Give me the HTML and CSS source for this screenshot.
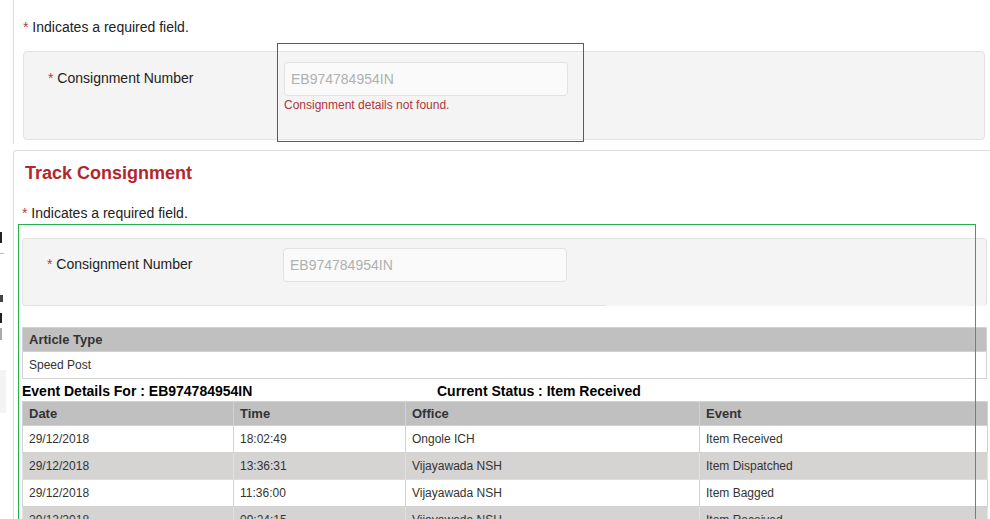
FILE: index.html
```html
<!DOCTYPE html>
<html lang="en">
<head>
    <meta charset="UTF-8">
    <meta name="viewport" content="width=device-width, initial-scale=1.0">
    <title>Track Consignment</title>
    <link rel="stylesheet" href="styles.css">
</head>
<body>
    <div class="page">
        <!-- fatia da coluna vizinha -->
        <div class="side-strip">
            <span class="frag frag-l1"></span>
            <span class="frag frag-line"></span>
            <span class="frag frag-s"></span>
            <span class="frag frag-l2"></span>
            <span class="frag frag-grey"></span>
            <span class="frag frag-box"></span>
        </div>

        <div class="main">
            <section class="panel panel-cut">
                <p class="req-note"><span class="req">*</span> Indicates a required field.</p>
                <div class="well">
                    <div class="form-row">
                        <label class="form-label"><span class="req">*</span> Consignment Number</label>
                        <div class="form-field">
                            <input class="form-input" type="text" placeholder="EB974784954IN">
                            <div class="field-error">Consignment details not found.</div>
                        </div>
                    </div>
                </div>
                <div class="mark mark-red"></div>
            </section>

            <section class="panel panel-track">
                <h2 class="panel-title">Track Consignment</h2>
                <p class="req-note"><span class="req">*</span> Indicates a required field.</p>
                <div class="well well-short">
                    <div class="form-row">
                        <label class="form-label"><span class="req">*</span> Consignment Number</label>
                        <div class="form-field">
                            <input class="form-input" type="text" placeholder="EB974784954IN">
                        </div>
                    </div>
                </div>

                <table class="grid grid-article">
                    <thead>
                        <tr><th>Article Type</th></tr>
                    </thead>
                    <tbody>
                        <tr><td>Speed Post</td></tr>
                    </tbody>
                </table>

                <div class="event-head">
                    <span class="event-for">Event Details For : EB974784954IN</span>
                    <span class="event-status">Current Status : Item Received</span>
                </div>

                <table class="grid grid-events">
                    <colgroup>
                        <col class="col-date">
                        <col class="col-time">
                        <col class="col-office">
                        <col class="col-event">
                    </colgroup>
                    <thead>
                        <tr>
                            <th>Date</th>
                            <th>Time</th>
                            <th>Office</th>
                            <th>Event</th>
                        </tr>
                    </thead>
                    <tbody>
                        <tr>
                            <td>29/12/2018</td>
                            <td>18:02:49</td>
                            <td>Ongole ICH</td>
                            <td>Item Received</td>
                        </tr>
                        <tr>
                            <td>29/12/2018</td>
                            <td>13:36:31</td>
                            <td>Vijayawada NSH</td>
                            <td>Item Dispatched</td>
                        </tr>
                        <tr>
                            <td>29/12/2018</td>
                            <td>11:36:00</td>
                            <td>Vijayawada NSH</td>
                            <td>Item Bagged</td>
                        </tr>
                        <tr>
                            <td>29/12/2018</td>
                            <td>09:24:15</td>
                            <td>Vijayawada NSH</td>
                            <td>Item Received</td>
                        </tr>
                        <tr>
                            <td>28/12/2018</td>
                            <td>20:14:02</td>
                            <td>Vijayawada NSH</td>
                            <td>Item Received</td>
                        </tr>
                    </tbody>
                </table>

                <div class="mark mark-green"></div>
            </section>
        </div>
    </div>
</body>
</html>
```

FILE: styles.css
```css
/* Estilos gerais */
html, body {
    margin: 0;
    padding: 0;
    overflow: hidden;
    height: 100%;
}

body {
    font-family: 'Liberation Sans', Arial, Helvetica, sans-serif;
    font-size: 14px;
    color: #222;
    background-color: #fff;
}

.page {
    display: flex;
    width: 990px;
}

/* coluna lateral cortada */
.side-strip {
    width: 13px;
    flex-shrink: 0;
    display: flex;
    flex-direction: column;
    align-items: flex-start;
}

.frag {
    display: block;
}

.frag-l1 {
    width: 2px;
    height: 11px;
    margin-top: 232px;
    background-color: #222;
}

.frag-line {
    width: 4px;
    height: 1px;
    margin-top: 10px;
    background-color: #bbb;
}

.frag-s {
    width: 3px;
    height: 7px;
    margin-top: 41px;
    background-color: #444;
}

.frag-l2 {
    width: 2px;
    height: 10px;
    margin-top: 11px;
    background-color: #222;
}

.frag-grey {
    width: 2px;
    height: 12px;
    margin-top: 5px;
    background-color: #aaa;
}

.frag-box {
    width: 6px;
    height: 43px;
    margin-top: 30px;
    background-color: #f4f4f4;
}

.main {
    flex: 1;
    min-width: 0;
}

/* Paineis */
.panel {
    position: relative;
    border-left: 1px solid #ddd;
}

.panel-cut {
    padding-bottom: 4px;
}

.panel-track {
    margin-top: 6px;
    border-top: 1px solid #ddd;
    border-top-left-radius: 4px;
    height: 380px;
}

.panel-title {
    margin: 0;
    padding: 12px 0 0 11px;
    font-size: 18px;
    line-height: 20px;
    font-weight: bold;
    color: #b3272b;
}

.req-note {
    margin: 0;
    padding: 18px 0 0 9px;
    line-height: 18px;
    font-size: 14px;
}

.panel-track .req-note {
    padding: 21px 0 0 8px;
}

.req {
    color: #b9403c;
}

.well {
    margin: 15px 5px 0 9px;
    padding: 10px 0 26px 24px;
    background-color: #f4f4f4;
    border: 1px solid #e3e3e3;
    border-radius: 4px;
}

.well-short {
    margin: 16px 3px 0 8px;
    padding: 9px 0 23px 24px;
    border-bottom-color: transparent;
    position: relative;
}

/* linha inferior curta do segundo bloco */
.well-short::after {
    content: '';
    position: absolute;
    left: 0;
    bottom: -1px;
    width: 583px;
    height: 1px;
    background-color: #e3e3e3;
}

.form-row {
    display: flex;
    align-items: flex-start;
}

.form-label {
    width: 236px;
    flex-shrink: 0;
    line-height: 32px;
    font-size: 14px;
    color: #222;
}

.form-input {
    display: block;
    width: 284px;
    height: 34px;
    box-sizing: border-box;
    padding: 6px 6px;
    font-family: inherit;
    font-size: 14px;
    color: #555;
    background-color: #fafafa;
    border: 1px solid #e2e2e2;
    border-radius: 4px;
    outline: none;
}

.form-input::placeholder {
    color: #b0b0b0;
}

.field-error {
    margin-top: 1px;
    font-size: 12px;
    line-height: 16px;
    color: #b1343a;
}

/* Tabelas */
.grid {
    margin-left: 8px;
    width: 965px;
    border-collapse: collapse;
    table-layout: fixed;
    font-size: 12px;
    color: #333;
}

.grid th, .grid td {
    border: 1px solid #d2d2d2;
    padding: 0 6px;
    text-align: left;
    vertical-align: middle;
}

.grid th {
    height: 23px;
    background-color: #c0c0c0;
    font-size: 13px;
    font-weight: bold;
    color: #333;
}

.grid td {
    height: 26px;
    background-color: #fff;
}

.grid-article {
    margin-top: 21px;
}

.grid-events tbody tr:nth-child(even) td {
    background-color: #d6d3d3;
    border-color: #dcdcdc #e2e2e2;
}

.col-date { width: 211px; }
.col-time { width: 172px; }
.col-office { width: 294px; }
.col-event { width: 288px; }

.event-head {
    display: flex;
    margin-left: 8px;
    padding-top: 2px;
    height: 20px;
    line-height: 20px;
    font-size: 14px;
    font-weight: bold;
    color: #000;
}

.event-for {
    width: 415px;
}

/* Marcacoes sobrepostas */
.mark {
    position: absolute;
    pointer-events: none;
}

.mark-red {
    left: 263px;
    top: 43px;
    width: 305px;
    height: 97px;
    border: 1px solid rgb(237, 28, 36);
}

.mark-green {
    left: 4px;
    top: 73px;
    width: 956px;
    height: 320px;
    border: 1px solid rgb(34, 177, 76);
}
```
